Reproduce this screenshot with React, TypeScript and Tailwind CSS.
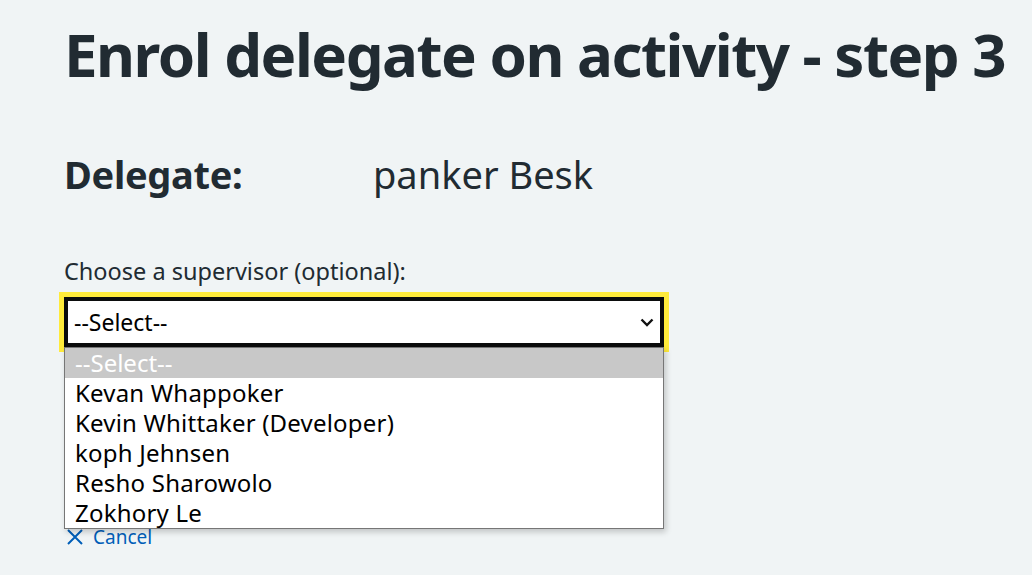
const supervisors = [
  "Kevan Whappoker",
  "Kevin Whittaker (Developer)",
  "koph Jehnsen",
  "Resho Sharowolo",
  "Zokhory Le",
];

function ChevronDown() {
  return (
    <svg width="14" height="9" viewBox="0 0 14 9" fill="none">
      <path d="M1.5 1.5L7 7L12.5 1.5" stroke="#111" strokeWidth="2.4" />
    </svg>
  );
}

function CrossIcon() {
  return (
    <svg width="18" height="18" viewBox="0 0 18 18" fill="none">
      <path d="M2 2L16 16M16 2L2 16" stroke="#005eb8" strokeWidth="2" />
    </svg>
  );
}

export default function App() {
  return (
    <div
      className="h-[575px] w-[1032px] overflow-hidden bg-[#f0f4f5] pl-16 text-[#212b32]"
      style={{ fontFamily: '"Noto Sans", "Open Sans", Arial, sans-serif' }}
    >
      <h1 className="pt-[14px] text-[60px] leading-[80px] font-bold tracking-[-1.5px] whitespace-nowrap">
        Enrol delegate on activity - step 3
      </h1>

      <div className="mt-[55px] flex text-[38px] leading-[50px]">
        <div className="w-[309px] font-bold tracking-[-0.3px]">Delegate:</div>
        <div>panker Besk</div>
      </div>

      <div className="mt-[56px]">
        <label className="block text-[23.5px] leading-[32px]">
          Choose a supervisor (optional):
        </label>

        <div className="relative mt-[10px] w-[600px]">
          <div className="absolute -inset-[5px] bg-[#ffeb3b]" />
          <div className="relative flex h-[50px] items-center justify-between border-4 border-[#0b0c0c] bg-white pr-[6px] pl-[6px] text-[23px] text-black">
            <span>--Select--</span>
            <ChevronDown />
          </div>

          <ul className="absolute top-[50px] left-0 z-10 w-[600px] border border-[#767676] bg-white text-[24px] leading-[30px] text-black shadow-[2px_3px_6px_rgba(0,0,0,0.2)]">
            <li className="bg-[#c8c8c8] px-[10px] text-white">--Select--</li>
            {supervisors.map((name) => (
              <li key={name} className="px-[10px] tracking-[0.2px]">
                {name}
              </li>
            ))}
          </ul>
        </div>

        <div className="mt-[177px] flex items-center gap-[9px] pl-[2px] text-[19px] text-[#005eb8]">
          <CrossIcon />
          <a href="#" className="leading-[26px]">
            Cancel
          </a>
        </div>
      </div>
    </div>
  );
}
